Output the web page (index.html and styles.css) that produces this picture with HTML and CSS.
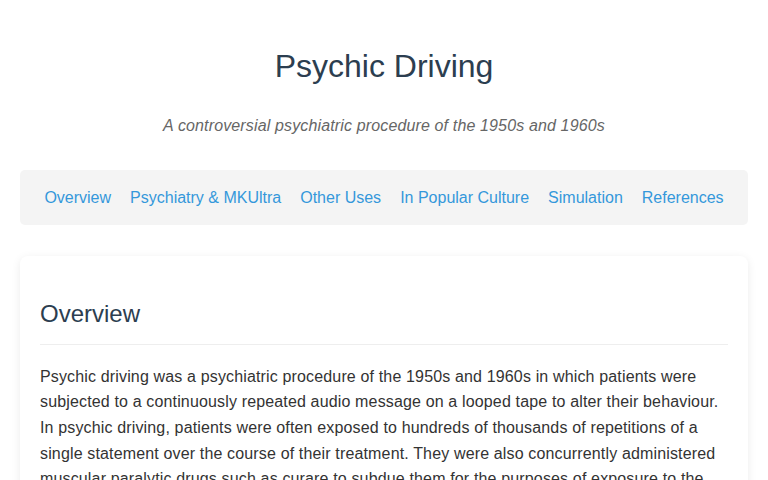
FILE: index.html
```html
<!DOCTYPE html>
<html lang="en">
<head>
    <meta charset="UTF-8">
    <meta name="viewport" content="width=device-width, initial-scale=1.0">
    <title>Psychic Driving</title>
    <link rel="stylesheet" href="styles.css">
</head>
<body>
    <header>
        <h1>Psychic Driving</h1>
        <p class="subtitle">A controversial psychiatric procedure of the 1950s and 1960s</p>
    </header>

    <nav>
        <a href="#overview">Overview</a>
        <a href="#psychiatry">Psychiatry &amp; MKUltra</a>
        <a href="#other-uses">Other Uses</a>
        <a href="#popular-culture">In Popular Culture</a>
        <a href="#simulation">Simulation</a>
        <a href="#references">References</a>
    </nav>

    <section id="overview" class="card">
        <h2>Overview</h2>
        <p>Psychic driving was a psychiatric procedure of the 1950s and 1960s in which patients were subjected to a continuously repeated audio message on a looped tape to alter their behaviour. In psychic driving, patients were often exposed to hundreds of thousands of repetitions of a single statement over the course of their treatment. They were also concurrently administered muscular paralytic drugs such as curare to subdue them for the purposes of exposure to the messages.</p>
    </section>
</body>
</html>
```

FILE: styles.css
```css
body {
    font-family: "Liberation Sans", Arial, sans-serif;
    margin: 0;
    padding: 20px;
    line-height: 1.6;
    color: #333;
    background-color: #fff;
}
header {
    text-align: center;
    margin-bottom: 31px;
}
h1 {
    color: #2c3e50;
    font-size: 32px;
    font-weight: 500;
    margin: 21px 0;
}
.subtitle {
    color: #666;
    font-style: italic;
    letter-spacing: 0.14px;
    margin: 0;
}
nav {
    display: flex;
    justify-content: center;
    gap: 19px;
    background-color: #f4f4f4;
    border-radius: 5px;
    padding: 15px 20px;
    margin-bottom: 31px;
}
nav a {
    color: #3498db;
    text-decoration: none;
}
.card {
    background-color: white;
    border-radius: 8px;
    padding: 20px;
    box-shadow: 0 2px 10px rgba(0, 0, 0, 0.08);
}
h2 {
    color: #2c3e50;
    font-size: 24px;
    font-weight: 500;
    margin: 19px 0 19px;
    padding-bottom: 10px;
    border-bottom: 1px solid #eee;
}
.card p {
    letter-spacing: 0.15px;
    margin: 0 0 16px;
}
```
